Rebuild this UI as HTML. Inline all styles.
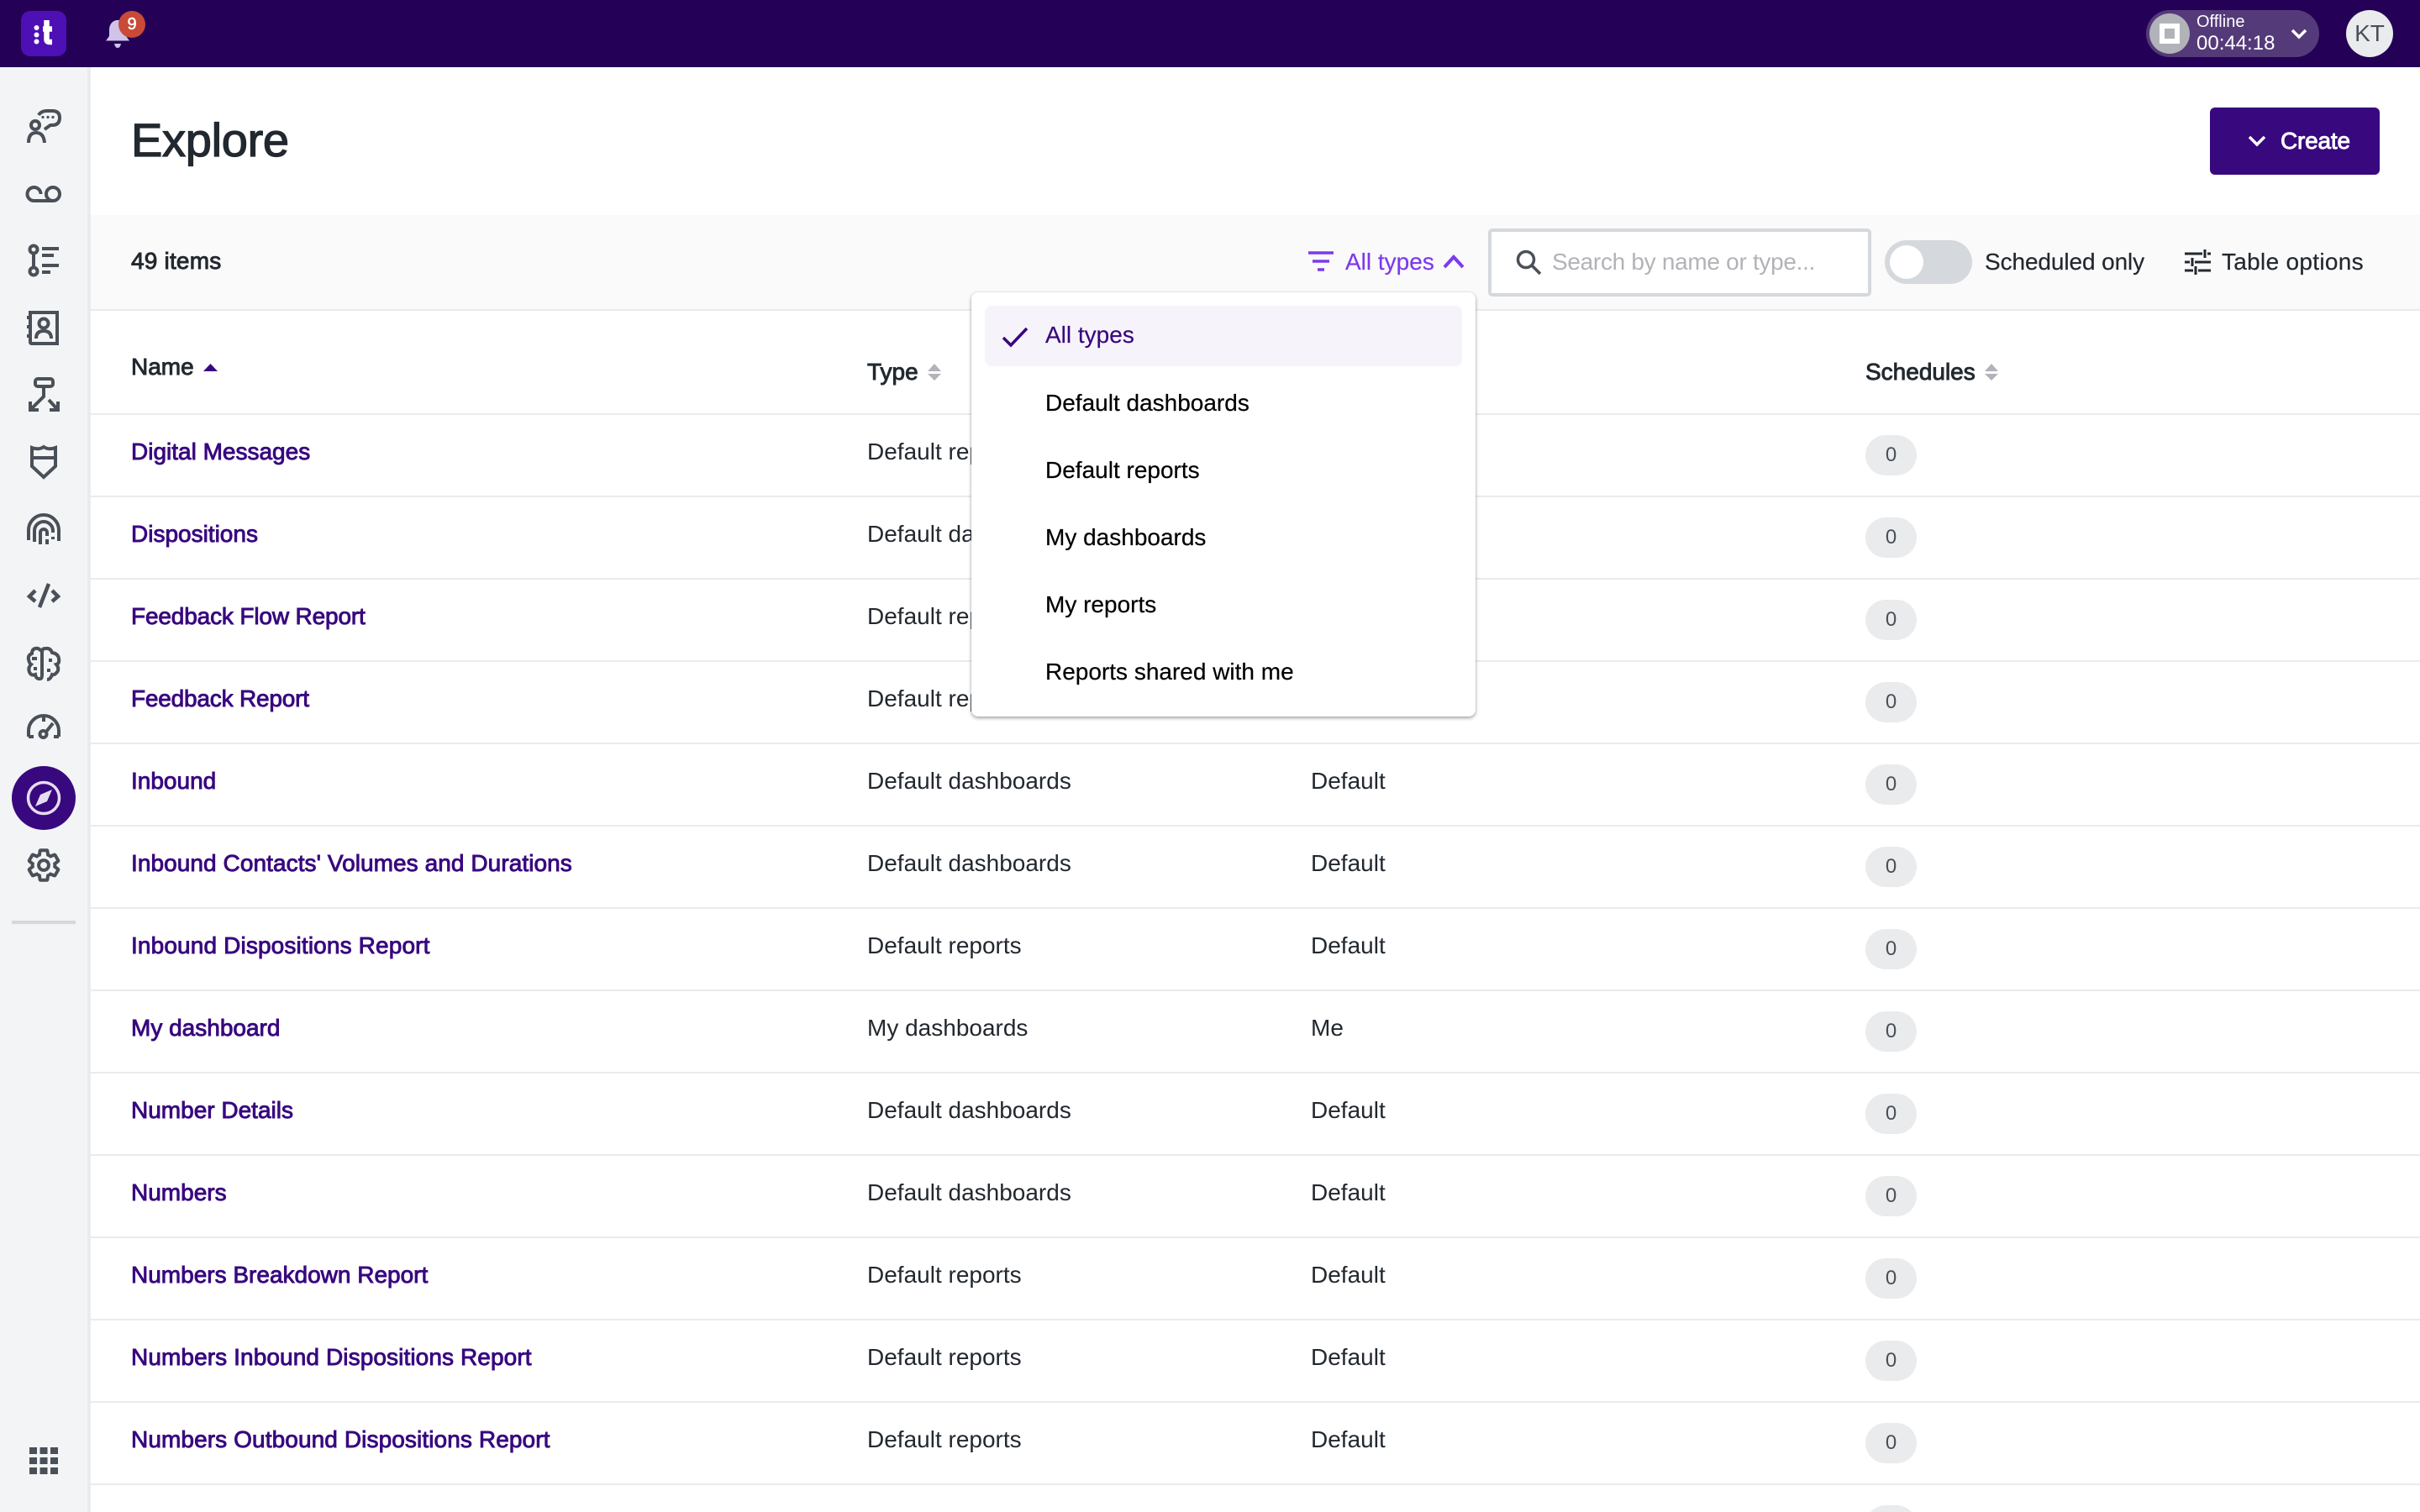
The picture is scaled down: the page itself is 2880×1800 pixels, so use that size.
<!DOCTYPE html>
<html lang="en"><head><meta charset="utf-8"><title>Explore</title>
<style>
*{box-sizing:border-box}
html,body{margin:0;padding:0;background:#fff;font-family:"Liberation Sans",Arial,sans-serif;color:#22282f}
#page{position:relative;width:2880px;height:1800px;overflow:hidden;background:#fff}
.a{position:absolute}
.t{position:absolute;white-space:nowrap;line-height:40px;font-size:28px}
.m{-webkit-text-stroke:.9px currentColor}
#top{left:0;top:0;width:2880px;height:80px;background:#240056}
#side{left:0;top:80px;width:108px;height:1720px;background:#f3f4f6;border-right:4px solid #e9ebed}
#bar{left:108px;top:256px;width:2772px;height:114px;background:#fafafa;border-bottom:2px solid #e9ebed}
.row{position:absolute;left:108px;width:2772px;height:98px;border-top:2px solid #e9ebed}
.n,.ty,.ow{position:absolute;white-space:nowrap;font-size:28px;line-height:40px;top:24px}
.n{left:48px;color:#38087f;-webkit-text-stroke:.9px #38087f}
.ty{left:924px}
.ow{left:1452px}
.bd{position:absolute;left:2112px;top:24px;width:61px;height:48px;border-radius:24px;background:#e9ebed;color:#4a5058;font-size:24px;line-height:48px;text-align:center}
#dd{left:1156px;top:348px;width:600px;height:505px;background:#fff;border-radius:8px;box-shadow:0 2px 4px rgba(0,0,0,.35),0 0 2px rgba(0,0,0,.12)}
#sel{left:16px;top:16px;width:568px;height:72px;background:#f6f4fa;border-radius:8px}
.i{position:absolute;white-space:nowrap;left:88px;font-size:28px;line-height:40px;color:#000;-webkit-text-stroke:.2px #000}
svg{position:absolute;left:0;top:0;overflow:visible}
</style></head><body>
<div id="page">

<div class="a" id="top"></div>
<div class="a" id="side"></div>

<svg width="2880" height="1800" viewBox="0 0 2880 1800" style="z-index:2">
  <!-- logo -->
  <rect x="25" y="13" width="54" height="54" rx="11" fill="#4d10b4"/>
  <circle cx="43.500" cy="33" r="3" fill="#fff"/><circle cx="43.500" cy="41.500" r="3" fill="#fff"/><circle cx="43.500" cy="49.500" r="3" fill="#fff"/>
  <path d="M55.500 24V47Q55.500 50 59 50H62M51 34.500H62" stroke="#fff" stroke-width="6.500" fill="none"/>
  <!-- bell -->
  <path d="M126 48.500L130 43V36C130 29 134 24 140 24S150 29 150 36V43L154 48.500Z" fill="#cfc4e8"/>
  <path d="M136 52H144Q143 57 140 57T136 52Z" fill="#cfc4e8"/>
  <circle cx="157" cy="29" r="16" fill="#c94a36"/>
  <!-- status -->
  <rect x="2554" y="12" width="206" height="56" rx="28" fill="#553a7a"/>
  <circle cx="2582" cy="40" r="24" fill="#b1b3b8"/>
  <rect x="2573" y="31" width="18" height="18" fill="none" stroke="#fff" stroke-width="6"/>
  <path d="M2728 36L2736 44L2744 36" fill="none" stroke="#fff" stroke-width="3.500"/>
  <circle cx="2820" cy="40" r="28" fill="#e9ebed"/>
  <!-- create -->
  <rect x="2630" y="128" width="202" height="80" rx="6" fill="#38087f"/>
  <path d="M2677 163L2686 172L2695 163" fill="none" stroke="#fff" stroke-width="3.500"/>

  <!-- sidebar icons -->
  <g fill="none" stroke="#4a5058" stroke-width="4">
    <!-- chat -->
    <circle cx="42" cy="149" r="5"/>
    <path d="M34 170Q34 158 43 158T53 170"/>
    <path d="M46 137Q49 132 56 132H62Q71 132 71 140Q71 149 62 149H60L53 154"/>
    <!-- voicemail -->
    <path d="M40.500 239A8 8 0 1 1 48.500 231M63 239H40.500M63 239A8 8 0 1 0 63 223A8 8 0 0 0 63 239Z"/>
    <!-- list -->
    <circle cx="40" cy="297" r="4.500"/><circle cx="40" cy="323" r="4.500"/>
    <path d="M40 302V318M50 296H70M50 304H64M50 316H70M50 324H60"/>
    <!-- contacts -->
    <path d="M36 372H68V409H38Q36 409 36 407ZM32 378H38M32 389H38M32 400H38"/>
    <circle cx="52" cy="385" r="5.500"/>
    <path d="M43 403Q43 394 52 394T61 403"/>
    <!-- flow -->
    <rect x="42" y="451" width="21" height="9" rx="3"/>
    <path d="M52 460V472L36 488M36 478V488H46M58 476L69 488M59 488H69V478"/>
    <!-- shield -->
    <path d="M38 533Q46 536 52 532Q58 536 66 533V555L52 568L38 555ZM38 545H66"/>
    <!-- fingerprint -->
    <path d="M34 643V631A18 18 0 0 1 70 631V644"/>
    <path d="M41 645V632A11 11 0 0 1 63 632V634M63 639V642"/>
    <path d="M48 648V634A4 4 0 0 1 56 634V638M56 642V648"/>
    <!-- code -->
    <path d="M42 703L35 710L42 716M62 703L69 710L62 716M58 695L47 723" stroke-width="4.500"/>
    <!-- brain -->
    <path d="M49 775Q46 771 42 772T38 778Q33 780 34 785T37 791Q33 795 35 800T42 803Q43 809 48 808Q50 808 50 803V776Q50 772 54 772Q60 771 62 777Q69 778 70 784T67 791Q71 796 68 800T62 803Q60 809 56 809"/>
    <path d="M44 784H38M44 796H40M62 786H58M60 798H56"/>
    <!-- gauge -->
    <path d="M34 877V870A18 18 0 0 1 70 870V877M34 877H40M64 877H70M52 853V859"/>
    <circle cx="51.500" cy="874" r="4"/>
    <path d="M55 871L63 861"/>
    <!-- gear -->
    <g transform="translate(29.800 1007.800) scale(1.850)" stroke-width="2.150"><path d="M19.14,12.94c0.04-0.3,0.06-0.61,0.06-0.94c0-0.32-0.02-0.64-0.07-0.94l2.03-1.58c0.18-0.14,0.23-0.41,0.12-0.61l-1.92-3.32c-0.12-0.22-0.37-0.29-0.59-0.22l-2.39,0.96c-0.5-0.38-1.03-0.7-1.62-0.94L14.4,2.81c-0.04-0.24-0.24-0.41-0.48-0.41h-3.84c-0.24,0-0.43,0.17-0.47,0.41L9.25,5.35C8.66,5.59,8.12,5.92,7.63,6.29L5.24,5.33c-0.22-0.08-0.47,0-0.59,0.22L2.74,8.87C2.62,9.08,2.66,9.34,2.86,9.48l2.03,1.58C4.84,11.36,4.8,11.69,4.8,12s0.02,0.64,0.07,0.94l-2.03,1.58c-0.18,0.14-0.23,0.41-0.12,0.61l1.92,3.32c0.12,0.22,0.37,0.29,0.59,0.22l2.39-0.96c0.5,0.38,1.03,0.7,1.62,0.94l0.36,2.54c0.05,0.24,0.24,0.41,0.48,0.41h3.84c0.24,0,0.44-0.17,0.47-0.41l0.36-2.54c0.59-0.24,1.13-0.56,1.62-0.94l2.39,0.96c0.22,0.08,0.47,0,0.59-0.22l1.92-3.32c0.12-0.22,0.07-0.47-0.12-0.61L19.14,12.94z"/><circle cx="12" cy="12" r="3.200"/></g>
  </g>
  <g fill="#4a5058"><circle cx="51" cy="139.500" r="1.600"/><circle cx="57" cy="139.500" r="1.600"/><circle cx="63" cy="139.500" r="1.600"/></g>
  <circle cx="52" cy="950" r="38" fill="#38087f"/>
  <circle cx="52" cy="950" r="18.500" fill="none" stroke="#e5dcf2" stroke-width="3.500"/>
  <path d="M62 940L56 954L42 960L48 946Z" fill="#e5dcf2"/>
  <rect x="14" y="1096" width="76" height="4" fill="#d5d8dc"/>
  <g fill="#4a5058">
    <rect x="35" y="1723" width="9" height="8"/><rect x="47.500" y="1723" width="9" height="8"/><rect x="60" y="1723" width="9" height="8"/>
    <rect x="35" y="1735" width="9" height="8"/><rect x="47.500" y="1735" width="9" height="8"/><rect x="60" y="1735" width="9" height="8"/>
    <rect x="35" y="1747" width="9" height="8"/><rect x="47.500" y="1747" width="9" height="8"/><rect x="60" y="1747" width="9" height="8"/>
  </g>
</svg>

<div class="t" style="z-index:3;left:149px;top:9px;width:16px;text-align:center;font-size:20px;color:#fff;-webkit-text-stroke:.5px #fff">9</div>
<div class="t" style="z-index:3;left:2614px;top:6px;font-size:20px;line-height:40px;color:#fff">Offline</div>
<div class="t" style="z-index:3;left:2614px;top:32px;font-size:24px;line-height:40px;color:#fff">00:44:18</div>
<div class="t" style="z-index:3;left:2792px;top:20px;width:56px;text-align:center;font-size:28px;color:#4a5058">KT</div>
<div class="t m" style="z-index:3;left:2714px;top:148px;color:#fff;letter-spacing:-.2px">Create</div>

<div class="t" style="left:156px;top:137px;font-size:56px;line-height:60px;letter-spacing:-.3px;-webkit-text-stroke:1.300px #22282f">Explore</div>

<div class="a" id="bar"></div>
<div class="t m" style="left:156px;top:291px;letter-spacing:.2px">49 items</div>
<svg width="2880" height="1800" viewBox="0 0 2880 1800" style="z-index:1">
  <path d="M1557 301H1587M1562 311H1582M1568 321H1576" fill="none" stroke="#7c3aed" stroke-width="3.500"/>
  <path d="M1719 318L1730 306L1741 318" fill="none" stroke="#7c3aed" stroke-width="4"/>
  <rect x="1773" y="274" width="452" height="77" rx="3" fill="#fff" stroke="#d5d8dc" stroke-width="4"/>
  <circle cx="1816" cy="309" r="9.500" fill="none" stroke="#4a5058" stroke-width="3.500"/>
  <path d="M1823 316L1833 326" stroke="#4a5058" stroke-width="3.500" fill="none"/>
  <rect x="2243" y="286" width="104" height="52" rx="26" fill="#d5d8dc"/>
  <circle cx="2269" cy="312" r="20" fill="#fff"/>
  <path d="M2600 302H2621M2627 302H2631M2600 312H2606M2612 312H2631M2600 322H2610M2616 322H2631M2624 297V307M2609 307V317M2613 317V327" fill="none" stroke="#22282f" stroke-width="3"/>
</svg>
<div class="t" style="z-index:1;left:1601px;top:292px;color:#7c3aed;-webkit-text-stroke:.2px #7c3aed">All types</div>
<div class="t" style="z-index:1;left:1847px;top:292px;color:#b1b3b8;letter-spacing:-.3px">Search by name or type...</div>
<div class="t" style="z-index:1;left:2362px;top:292px;letter-spacing:-.1px;-webkit-text-stroke:.2px #22282f">Scheduled only</div>
<div class="t" style="z-index:1;left:2644px;top:292px;letter-spacing:.3px;-webkit-text-stroke:.2px #22282f">Table options</div>

<!-- table header -->
<div class="t m" style="left:156px;top:417px">Name</div>
<div class="t m" style="left:1032px;top:423px">Type</div>
<div class="t m" style="left:2220px;top:423px">Schedules</div>
<svg width="2880" height="1800" viewBox="0 0 2880 1800">
  <path d="M242 442L250.500 433L259 442Z" fill="#38087f"/>
  <path d="M1104 442L1112 433L1120 442ZM1104 445L1112 453L1120 445Z" fill="#b1b3b8"/>
  <path d="M2362 442L2370 433L2378 442ZM2362 445L2370 453L2378 445Z" fill="#b1b3b8"/>
</svg>

<!-- rows -->
<div class="row" style="top:492px"><div class="n">Digital Messages</div><div class="ty">Default reports</div><div class="ow">Default</div><div class="bd">0</div></div>
<div class="row" style="top:590px"><div class="n">Dispositions</div><div class="ty">Default dashboards</div><div class="ow">Default</div><div class="bd">0</div></div>
<div class="row" style="top:688px"><div class="n" style="letter-spacing:-.15px">Feedback Flow Report</div><div class="ty">Default reports</div><div class="ow">Default</div><div class="bd">0</div></div>
<div class="row" style="top:786px"><div class="n" style="letter-spacing:-.2px">Feedback Report</div><div class="ty">Default reports</div><div class="ow">Default</div><div class="bd">0</div></div>
<div class="row" style="top:884px"><div class="n">Inbound</div><div class="ty">Default dashboards</div><div class="ow">Default</div><div class="bd">0</div></div>
<div class="row" style="top:982px"><div class="n" style="letter-spacing:.07px">Inbound Contacts' Volumes and Durations</div><div class="ty">Default dashboards</div><div class="ow">Default</div><div class="bd">0</div></div>
<div class="row" style="top:1080px"><div class="n" style="letter-spacing:.14px">Inbound Dispositions Report</div><div class="ty">Default reports</div><div class="ow">Default</div><div class="bd">0</div></div>
<div class="row" style="top:1178px"><div class="n">My dashboard</div><div class="ty">My dashboards</div><div class="ow">Me</div><div class="bd">0</div></div>
<div class="row" style="top:1276px"><div class="n">Number Details</div><div class="ty">Default dashboards</div><div class="ow">Default</div><div class="bd">0</div></div>
<div class="row" style="top:1374px"><div class="n">Numbers</div><div class="ty">Default dashboards</div><div class="ow">Default</div><div class="bd">0</div></div>
<div class="row" style="top:1472px"><div class="n">Numbers Breakdown Report</div><div class="ty">Default reports</div><div class="ow">Default</div><div class="bd">0</div></div>
<div class="row" style="top:1570px"><div class="n" style="letter-spacing:.1px">Numbers Inbound Dispositions Report</div><div class="ty">Default reports</div><div class="ow">Default</div><div class="bd">0</div></div>
<div class="row" style="top:1668px"><div class="n" style="letter-spacing:.1px">Numbers Outbound Dispositions Report</div><div class="ty">Default reports</div><div class="ow">Default</div><div class="bd">0</div></div>
<div class="row" style="top:1766px"><div class="n">Numbers Overview</div><div class="ty">Default reports</div><div class="ow">Default</div><div class="bd">0</div></div>

<!-- dropdown -->
<div class="a" id="dd" style="z-index:5">
  <div class="a" id="sel"></div>
  <svg width="600" height="505" viewBox="0 0 600 505"><path d="M38 54L47 63L66 43" fill="none" stroke="#38087f" stroke-width="3.500"/></svg>
  <div class="i" style="top:31px;color:#38087f;-webkit-text-stroke:.2px #38087f">All types</div>
  <div class="i" style="top:112px">Default dashboards</div>
  <div class="i" style="top:192px">Default reports</div>
  <div class="i" style="top:272px">My dashboards</div>
  <div class="i" style="top:352px">My reports</div>
  <div class="i" style="top:432px">Reports shared with me</div>
</div>
</div>
</body></html>
